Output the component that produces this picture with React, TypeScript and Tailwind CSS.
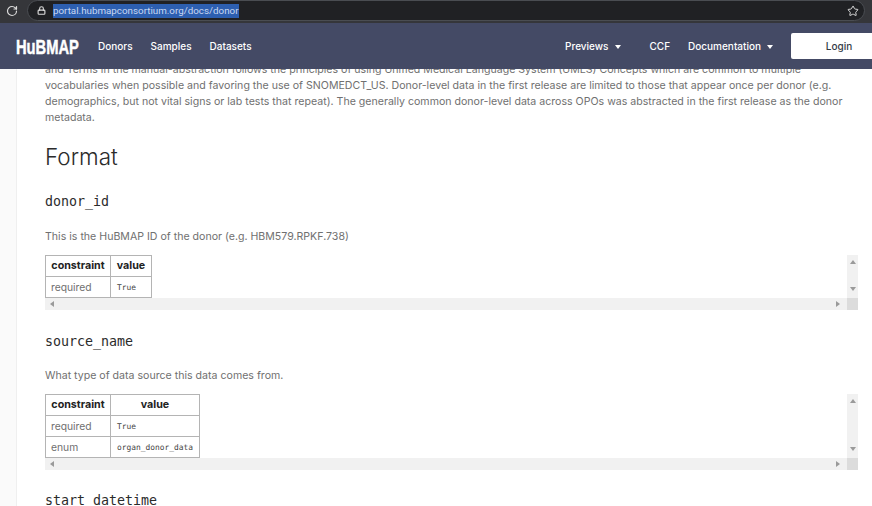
import React from 'react';
import { Lock, RotateCw, Star } from 'lucide-react';

const Caret = () => (
    <svg width="6" height="4" viewBox="0 0 6 4" className="ml-[6px] mt-[1px]">
        <path d="M0 0h6L3 4z" fill="currentColor" />
    </svg>
);

const ScrollArrow = ({ dir }: { dir: 'up' | 'down' | 'left' | 'right' }) => {
    const paths = {
        up: 'M0 4L3 0l3 4z',
        down: 'M0 0h6L3 4z',
        left: 'M4 0v6L0 3z',
        right: 'M0 0v6l4-3z',
    };
    return (
        <svg width="6" height="6" viewBox="0 0 6 6" className="shrink-0">
            <path d={paths[dir]} fill="#9a9a9a" />
        </svg>
    );
};

const cellClass = 'border border-[#b4b4b4] h-[21px] py-0';
const codeClass = "block pt-[1px] pl-[1px] font-['DejaVu_Sans_Mono',monospace] text-[7.9px] leading-[10px] text-[#444]";

const FieldTable = ({ valueWidth, rows }: { valueWidth: string; rows: string[][] }) => (
    <div className="mt-[10px] mr-[14px] grid grid-cols-[1fr_11px] grid-rows-[auto_12px]">
        <div className="bg-white">
            <table className="border-collapse table-fixed leading-none">
                <thead>
                    <tr className="text-[#222] text-[10.7px]">
                        <th className={`${cellClass} px-[5px] w-[65px] font-bold`}>constraint</th>
                        <th className={`${cellClass} px-[5px] ${valueWidth} font-bold`}>value</th>
                    </tr>
                </thead>
                <tbody>
                    {rows.map(([name, value]) => (
                        <tr key={name}>
                            <td className={`${cellClass} px-[5px] text-[#707070] text-[10.3px]`}>{name}</td>
                            <td className={`${cellClass} px-[5px]`}><span className={codeClass}>{value}</span></td>
                        </tr>
                    ))}
                </tbody>
            </table>
        </div>
        <div className="bg-[#f1f1f1] flex flex-col items-center justify-between py-[5px]">
            <ScrollArrow dir="up" />
            <ScrollArrow dir="down" />
        </div>
        <div className="bg-[#f1f1f1] flex items-center justify-between px-[5px]">
            <ScrollArrow dir="left" />
            <ScrollArrow dir="right" />
        </div>
        <div className="bg-[#dcdcdc]" />
    </div>
);

const FieldName = ({ children, className }: { children: string; className: string }) => (
    <h3 className={`font-['DejaVu_Sans_Mono',monospace] text-[13.3px] leading-[18px] text-[#2b2b2b] ${className}`}>{children}</h3>
);

export default function App() {
    return (
        <div className="w-[872px] h-[506px] overflow-hidden flex flex-col bg-white font-['Inter',sans-serif]">
            {/* Browser bar */}
            <div className="h-[23px] shrink-0 bg-[#35363a] flex items-start pl-[6px] pr-[7px]">
                <RotateCw size={12} strokeWidth={2.4} className="text-[#dcdcdc] mt-[5px]" />
                <div className="ml-[9px] flex-1 h-[21px] rounded-full bg-[#202124] border border-[#4a4d52] flex items-center pl-[9px] pr-[5px]">
                    <Lock size={9} strokeWidth={3} className="text-[#dcdcdc]" />
                    <span className="ml-[7px] bg-[#2d5fb0] text-[#c9d8f2] text-[9.8px] leading-[14px] font-['Roboto',sans-serif]">portal.hubmapconsortium.org/docs/donor</span>
                    <Star size={12} className="ml-auto text-[#dcdcdc]" />
                </div>
            </div>

            {/* Nav */}
            <nav className="h-[46px] shrink-0 bg-[#444a65] flex items-center text-white text-[10px] font-medium relative z-10">
                <span className="ml-[16px] w-[62px] origin-left scale-x-[0.7] text-[21px] font-bold font-['Liberation_Sans',sans-serif] whitespace-nowrap leading-none [-webkit-text-stroke:0.5px_white]">HuBMAP</span>
                <a className="ml-[20px]">Donors</a>
                <a className="ml-[18px]">Samples</a>
                <a className="ml-[18px]">Datasets</a>
                <a className="ml-auto flex items-center">Previews<Caret /></a>
                <a className="ml-[29px]">CCF</a>
                <a className="ml-[18px] flex items-center">Documentation<Caret /></a>
                <button className="ml-[18px] w-[81px] h-[26px] pl-[15px] bg-white rounded-l-[2px] text-[#333a45] text-[10px]">Login</button>
            </nav>

            {/* Page */}
            <main className="flex-1 min-h-0 overflow-hidden flex">
                <div className="w-[17px] shrink-0 bg-[#fafafa] border-r border-[#efefef]" />
                <div className="flex-1 pl-[28px] overflow-hidden">
                    <p className="-mt-[7px] text-[10.6px] leading-[16px] text-[#707070] whitespace-nowrap">
                        and Terms in the manual-abstraction follows the principles of using Unified Medical Language System (UMLS) Concepts which are common to multiple<br />
                        vocabularies when possible and favoring the use of SNOMEDCT_US. Donor-level data in the first release are limited to those that appear once per donor (e.g.<br />
                        demographics, but not vital signs or lab tests that repeat). The generally common donor-level data across OPOs was abstracted in the first release as the donor<br />
                        metadata.
                    </p>
                    <h1 className="mt-[15px] text-[22.5px] leading-[32px] font-light text-[#2b2b2b]">Format</h1>

                    <FieldName className="mt-[20px]">donor_id</FieldName>
                    <p className="mt-[18px] text-[10.6px] leading-[16px] text-[#707070]">This is the HuBMAP ID of the donor (e.g. HBM579.RPKF.738)</p>
                    <FieldTable valueWidth="w-[41px]" rows={[['required', 'True']]} />

                    <FieldName className="mt-[23px]">source_name</FieldName>
                    <p className="mt-[17px] text-[10.6px] leading-[16px] text-[#707070]">What type of data source this data comes from.</p>
                    <FieldTable valueWidth="w-[89px]" rows={[['required', 'True'], ['enum', 'organ_donor_data']]} />

                    <FieldName className="mt-[22px]">start_datetime</FieldName>
                </div>
            </main>
        </div>
    );
}
